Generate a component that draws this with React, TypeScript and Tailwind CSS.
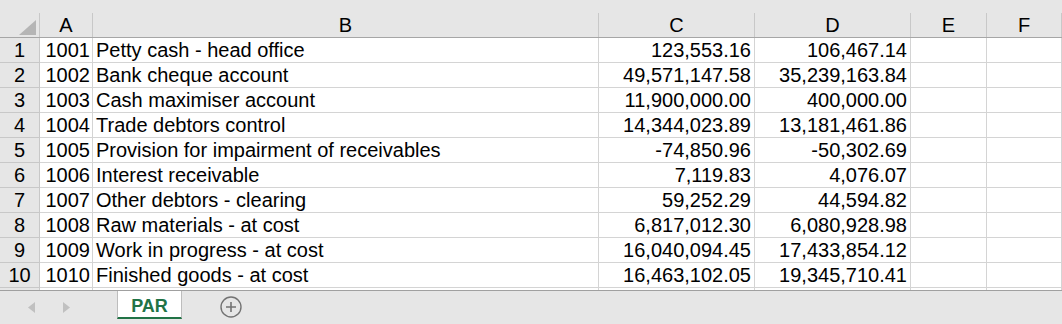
const cols = ['A', 'B', 'C', 'D', 'E', 'F']

const rows: [string, string, string, string][] = [
  ['1001', 'Petty cash - head office', '123,553.16', '106,467.14'],
  ['1002', 'Bank cheque account', '49,571,147.58', '35,239,163.84'],
  ['1003', 'Cash maximiser account', '11,900,000.00', '400,000.00'],
  ['1004', 'Trade debtors control', '14,344,023.89', '13,181,461.86'],
  ['1005', 'Provision for impairment of receivables', '-74,850.96', '-50,302.69'],
  ['1006', 'Interest receivable', '7,119.83', '4,076.07'],
  ['1007', 'Other debtors - clearing', '59,252.29', '44,594.82'],
  ['1008', 'Raw materials - at cost', '6,817,012.30', '6,080,928.98'],
  ['1009', 'Work in progress - at cost', '16,040,094.45', '17,433,854.12'],
  ['1010', 'Finished goods - at cost', '16,463,102.05', '19,345,710.41'],
]

const grid = 'grid grid-cols-[40px_53px_506px_156px_156px_76px_1fr]'
const cell = 'border-r border-b border-[#d4d4d4] bg-white text-[20px] leading-[24px] whitespace-nowrap overflow-hidden'

export default function App() {
  return (
    <div
      className="w-[1062px] h-[324px] overflow-hidden bg-[#e6e6e6] text-black flex flex-col"
      style={{ fontFamily: '"Liberation Sans", Arial, sans-serif' }}
    >
      <div className="h-[13px] shrink-0" />

      {/* column headers */}
      <div className={`${grid} h-[25px] shrink-0 border-b border-[#a6a6a6]`}>
        <div className="border-r border-[#c8c8c8] flex items-end justify-end pr-[3px] pb-[2px]">
          <svg width="17" height="15" viewBox="0 0 17 15">
            <polygon points="0,15 17,15 17,0" fill="#b5b5b5" />
          </svg>
        </div>
        {cols.map((c) => (
          <div key={c} className="border-r border-[#c8c8c8] text-center text-[20px] leading-[24px]">
            {c}
          </div>
        ))}
      </div>

      {/* body rows */}
      {rows.map((r, i) => (
        <div key={r[0]} className={`${grid} h-[25px] shrink-0`}>
          <div className="border-r border-b border-[#c8c8c8] bg-[#e6e6e6] text-center text-[20px] leading-[24px]">
            {i + 1}
          </div>
          <div className={`${cell} text-right pr-[2px]`}>{r[0]}</div>
          <div className={`${cell} pl-[3px]`}>{r[1]}</div>
          <div className={`${cell} text-right pr-[3px]`}>{r[2]}</div>
          <div className={`${cell} text-right pr-[3px]`}>{r[3]}</div>
          <div className={cell} />
          <div className={cell} />
        </div>
      ))}

      {/* partial next row */}
      <div className={`${grid} h-[2px] shrink-0`}>
        <div className="border-r border-[#c8c8c8] bg-[#e6e6e6]" />
        {cols.map((c) => (
          <div key={c} className="border-r border-[#d4d4d4] bg-white" />
        ))}
      </div>
      <div className="h-px bg-[#a0a0a0] shrink-0" />

      {/* sheet tabs */}
      <div className="flex items-start h-[33px] shrink-0">
        <div className="w-[117px] h-[28px] flex items-center pl-[28px] gap-[28px] pt-[4px]">
          <svg width="7" height="11" viewBox="0 0 7 11">
            <polygon points="7,0 0,5.5 7,11" fill="#c0c0c0" />
          </svg>
          <svg width="7" height="11" viewBox="0 0 7 11">
            <polygon points="0,0 7,5.5 0,11" fill="#c0c0c0" />
          </svg>
        </div>
        <div className="w-[65px] h-[28px] bg-white border-x border-[#bdbdbd] border-b-2 border-b-[#217346] flex justify-center">
          <span className="text-[18px] leading-[26px] pt-[2px] font-bold text-[#217346]">PAR</span>
        </div>
        <div className="ml-[38px] mt-[5px]">
          <svg width="22" height="22" viewBox="0 0 22 22">
            <circle cx="11" cy="11" r="10" fill="none" stroke="#737373" strokeWidth="1.4" />
            <path d="M11 6v10M6 11h10" stroke="#737373" strokeWidth="1.6" />
          </svg>
        </div>
      </div>
    </div>
  )
}
